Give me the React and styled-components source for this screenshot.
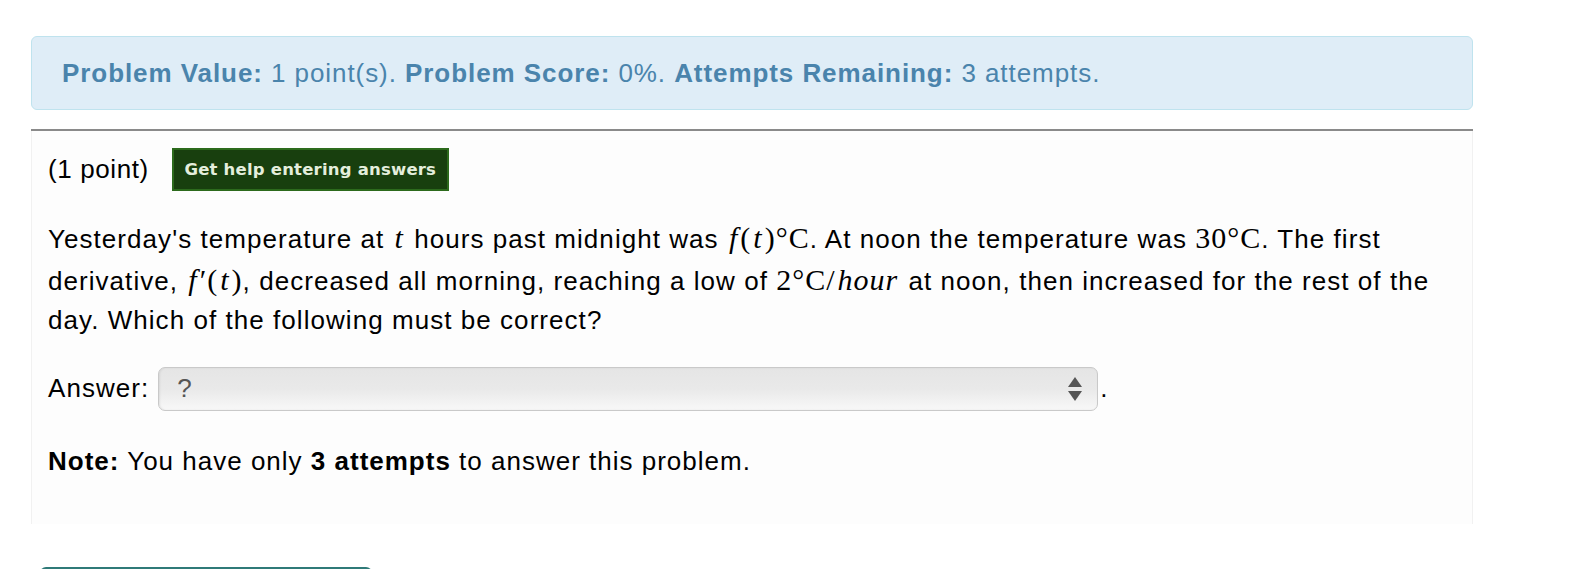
import React from "react";
import styled, { createGlobalStyle } from "styled-components";

const GlobalStyle = createGlobalStyle`
  body {
    margin: 0;
    background: #fff;
    font-family: "Liberation Sans", Arial, Helvetica, sans-serif;
    color: #000;
  }
`;

const Page = styled.div`
  padding: 36px 0 0 31px;
  width: 1442px;
`;

const Alert = styled.div`
  background: #dfedf7;
  border: 1px solid #bfe3ee;
  border-radius: 6px;
  height: 72px;
  display: flex;
  align-items: center;
  padding-left: 30px;
  font-size: 26px;
  letter-spacing: 0.93px;
  color: #4a84ac;
`;

const Label = styled.b`
  font-weight: bold;
`;

const Divider = styled.div`
  margin-top: 19px;
  height: 2px;
  background: #8a8a8a;
`;

const Panel = styled.div`
  background: #fdfdfd;
  border-left: 1px solid #f1f1f1;
  border-right: 1px solid #f1f1f1;
  padding: 17px 16px 0 16px;
  height: 376px;
  font-size: 26px;
  letter-spacing: 1.05px;
`;

const PointRow = styled.div`
  display: flex;
  align-items: center;
  gap: 23px;
  height: 43px;
`;

const PointLabel = styled.span`
  letter-spacing: 0.6px;
`;

const HelpButton = styled.div`
  height: 43px;
  width: 277px;
  box-sizing: border-box;
  background: #183f0e;
  border: 2px solid #2c6a1c;
  display: flex;
  align-items: center;
  justify-content: center;
  color: #e4eedc;
  font-family: "DejaVu Sans", Verdana, sans-serif;
  font-weight: bold;
  font-size: 16.5px;
  letter-spacing: 0.2px;
`;

const Question = styled.p`
  margin: 27px 0 0 0;
  line-height: 39.5px;
  white-space: nowrap;
`;

const Mi = styled.i`
  font-family: "Liberation Serif", "Times New Roman", serif;
  font-size: 30px;
  letter-spacing: 1px;
  margin: 0 2px;
`;

const Mn = styled.span`
  font-family: "Liberation Serif", "Times New Roman", serif;
  font-size: 30px;
  letter-spacing: 1px;
`;

const AnswerRow = styled.div`
  display: flex;
  align-items: center;
  margin-top: 26px;
  gap: 9px;
`;

const Select = styled.div`
  width: 940px;
  height: 44px;
  box-sizing: border-box;
  border: 1.5px solid #c9c9c9;
  border-radius: 7px;
  background: linear-gradient(#e5e5e5, #e9e9e9 50%, #f8f8f8);
  box-shadow: inset 1px 0 2px rgba(0, 0, 0, 0.08);
  display: flex;
  align-items: center;
  justify-content: space-between;
  padding: 0 14px 0 18px;
  color: #555;
  font-size: 26px;
`;

const Arrows = styled.svg`
  width: 16px;
  height: 30px;
`;

const Dot = styled.span`
  margin-left: -7px;
`;

const Note = styled.p`
  margin: 35px 0 0 0;
  letter-spacing: 1px;
`;

const BottomButton = styled.div`
  margin: 43px 0 0 9px;
  width: 332px;
  height: 20px;
  border-radius: 6px 6px 0 0;
  background: #2f7a78;
`;

export default function App() {
  return (
    <>
      <GlobalStyle />
      <Page>
        <Alert>
          <span>
            <Label>Problem Value:</Label> 1 point(s). <Label>Problem Score:</Label> 0%.{" "}
            <Label>Attempts Remaining:</Label> 3 attempts.
          </span>
        </Alert>
        <Divider />
        <Panel>
          <PointRow>
            <PointLabel>(1 point)</PointLabel>
            <HelpButton>Get help entering answers</HelpButton>
          </PointRow>
          <Question>
            Yesterday's temperature at <Mi>t</Mi> hours past midnight was{" "}
            <Mi>f</Mi><Mn>(</Mn><Mi>t</Mi><Mn>)°C</Mn>. At noon the temperature was{" "}
            <Mn>30°C</Mn>. The first
            <br />
            derivative, <Mi>f</Mi><Mn>′(</Mn><Mi>t</Mi><Mn>)</Mn>, decreased all morning,
            reaching a low of <Mn>2°C/</Mn><Mi>hour</Mi> at noon, then increased for the
            rest of the
            <br />
            day. Which of the following must be correct?
          </Question>
          <AnswerRow>
            <span>Answer:</span>
            <Select>
              <span>?</span>
              <Arrows viewBox="0 0 16 30">
                <path d="M8 3 L15 13 L1 13 Z" fill="#555" />
                <path d="M1 17 L15 17 L8 27 Z" fill="#555" />
              </Arrows>
            </Select>
            <Dot>.</Dot>
          </AnswerRow>
          <Note>
            <b>Note:</b> You have only <b>3 attempts</b> to answer this problem.
          </Note>
        </Panel>
        <BottomButton />
      </Page>
    </>
  );
}
